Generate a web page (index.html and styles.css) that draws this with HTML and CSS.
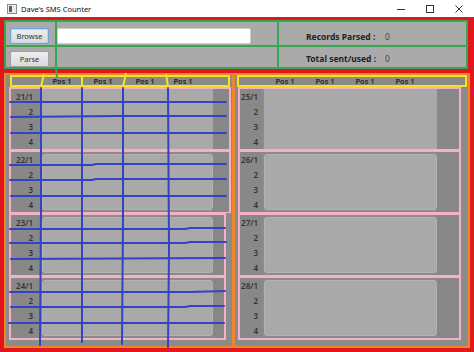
FILE: index.html
```html
<!DOCTYPE html>
<html lang="en">
<head>
    <meta charset="UTF-8">
    <meta name="viewport" content="width=device-width, initial-scale=1.0">
    <title>Dave's SMS Counter</title>
    <link rel="stylesheet" href="styles.css">
</head>
<body>
<div class="window">
    <header class="titlebar">
        <svg class="app-icon" width="10" height="10" viewBox="0 0 10 10">
            <rect x="0.5" y="0.5" width="9" height="9" fill="#ececec" stroke="#8a8a8a"/>
            <rect x="2" y="2" width="3" height="6" fill="#5f5f5f"/>
        </svg>
        <span class="title">Dave's SMS Counter</span>
        <div class="controls">
            <span class="ctl"><svg width="10" height="10" viewBox="0 0 10 10"><path d="M1 5.5H9" stroke="#333" fill="none"/></svg></span>
            <span class="ctl"><svg width="10" height="10" viewBox="0 0 10 10"><rect x="1.5" y="1.5" width="7" height="7" stroke="#333" fill="none"/></svg></span>
            <span class="ctl"><svg width="10" height="10" viewBox="0 0 10 10"><path d="M1.5 1.5L8.5 8.5M8.5 1.5L1.5 8.5" stroke="#333" fill="none"/></svg></span>
        </div>
    </header>

    <div class="app">
        <section class="top-panel">
            <div class="cell cell-up btn-cell"><button class="btn btn-focus">Browse</button></div>
            <div class="cell cell-up"><input class="file-field" type="text"></div>
            <div class="cell stat-cell"><span class="stat-label">Records Parsed :</span><span class="stat-value">0</span></div>
            <div class="cell btn-cell"><button class="btn">Parse</button></div>
            <div class="cell"></div>
            <div class="cell stat-cell"><span class="stat-label">Total sent/used :</span><span class="stat-value">0</span></div>
        </section>

        <section class="bottom-panel">
            <!-- left week -->
            <div class="pane pane-left">
                <div class="col-head">
                    <span></span><span>Pos 1</span><span>Pos 1</span><span>Pos 1</span><span>Pos 1</span>
                </div>
                <div class="group">
                    <div class="labels"><span>21/1</span><span>2</span><span>3</span><span>4</span></div>
                    <div class="rows"></div>
                    <div class="scroll"></div>
                </div>
                <div class="group boxed">
                    <div class="labels"><span>22/1</span><span>2</span><span>3</span><span>4</span></div>
                    <div class="rows"></div>
                    <div class="scroll"></div>
                </div>
                <div class="group boxed narrow">
                    <div class="labels"><span>23/1</span><span>2</span><span>3</span><span>4</span></div>
                    <div class="rows"></div>
                    <div class="scroll"></div>
                </div>
                <div class="group boxed narrow">
                    <div class="labels"><span>24/1</span><span>2</span><span>3</span><span>4</span></div>
                    <div class="rows"></div>
                    <div class="scroll"></div>
                </div>
            </div>

            <!-- right week -->
            <div class="pane pane-right">
                <div class="col-head">
                    <span></span><span>Pos 1</span><span>Pos 1</span><span>Pos 1</span><span>Pos 1</span>
                </div>
                <div class="group">
                    <div class="labels"><span>25/1</span><span>2</span><span>3</span><span>4</span></div>
                    <div class="rows"></div>
                    <div class="scroll"></div>
                </div>
                <div class="group boxed">
                    <div class="labels"><span>26/1</span><span>2</span><span>3</span><span>4</span></div>
                    <div class="rows"></div>
                    <div class="scroll"></div>
                </div>
                <div class="group boxed">
                    <div class="labels"><span>27/1</span><span>2</span><span>3</span><span>4</span></div>
                    <div class="rows"></div>
                    <div class="scroll"></div>
                </div>
                <div class="group boxed">
                    <div class="labels"><span>28/1</span><span>2</span><span>3</span><span>4</span></div>
                    <div class="rows"></div>
                    <div class="scroll"></div>
                </div>
            </div>
        </section>
    </div>

    <!-- hand drawn markup over the screenshot -->
    <svg class="marks" width="474" height="352" viewBox="0 0 474 352">
        <g stroke="#3242c9" stroke-width="2" fill="none" stroke-linecap="round">
            <path d="M41 88 L41 210 L40 345"/>
            <path d="M82 88 L82 260 L82 342"/>
            <path d="M123 88 L123 220 L122 344"/>
            <path d="M168 88 L169 250 L168 347"/>
            <path d="M10 102 L226 102"/>
            <path d="M11 117 L120 116 L226 116"/>
            <path d="M11 133 L226 133"/>
            <path d="M10 165 L92 165 L96 164 L226 164"/>
            <path d="M10 180 L92 180 L96 179 L226 179"/>
            <path d="M11 196 L226 196"/>
            <path d="M10 229 L185 229 L190 228 L225 228"/>
            <path d="M10 243 L185 243 L190 242 L226 242"/>
            <path d="M11 259 L225 258"/>
            <path d="M10 292 L190 292 L225 291"/>
            <path d="M11 307 L185 307 L190 306 L224 306"/>
            <path d="M9 323 L224 323"/>
        </g>
        <g stroke="#f1e41b" stroke-width="2" fill="none">
            <path d="M44 74 L41 87"/>
            <path d="M82 75 L82 87"/>
            <path d="M126 73 L123 87"/>
            <path d="M166 74 L168 87"/>
        </g>
        <path d="M56 68 L57 77" stroke="#37a84f" stroke-width="2" fill="none"/>
    </svg>
</div>
</body>
</html>
```

FILE: styles.css
```css
* {
    box-sizing: border-box;
}

body {
    margin: 0;
    background-color: #fff;
    font-family: 'Noto Sans', 'Open Sans', sans-serif;
}

.window {
    position: relative;
    width: 474px;
    height: 352px;
    overflow: hidden;
}

/* Title bar */
.titlebar {
    height: 17px;
    display: flex;
    align-items: center;
    padding-left: 7px;
    background-color: #fff;
}

.app-icon {
    display: block;
}

.title {
    margin-left: 4px;
    font-size: 7.5px;
    color: #111;
}

.controls {
    margin-left: auto;
    display: flex;
    height: 100%;
}

.ctl {
    width: 29px;
    display: flex;
    align-items: center;
    justify-content: center;
}

.ctl:last-child {
    margin-right: 1px;
}

/* App frame (red) */
.app {
    height: 335px;
    display: flex;
    flex-direction: column;
    gap: 4px;
    padding: 3px 4px 4px 4px;
    background-color: #e3151d;
}

/* Top controls (green) */
.top-panel {
    height: 49px;
    margin-right: 2px;
    display: grid;
    grid-template-columns: 49px 220px 1fr;
    grid-template-rows: 23px 20px;
    gap: 2px;
    padding: 2px;
    background-color: #37a84f;
}

.cell {
    display: flex;
    align-items: flex-end;
    background-color: #aaa;
}

.cell-up {
    padding-bottom: 1px;
}

.btn-cell {
    padding-left: 4px;
}

.btn {
    width: 39px;
    height: 16px;
    padding: 0;
    font-family: inherit;
    font-size: 7.5px;
    color: #333;
    background: linear-gradient(#eee, #dadada);
    border: 1px solid #a0a0a0;
    border-radius: 2px;
}

.btn-focus {
    border-color: #6aa6d6;
    box-shadow: inset 0 0 0 1px #bcd8ef;
}

.file-field {
    width: 194px;
    height: 16px;
    padding: 0;
    border: 1px solid #cfcfcf;
    border-radius: 2px;
    background-color: #fff;
}

.stat-cell {
    padding-left: 27px;
    padding-bottom: 2px;
    font-size: 8.5px;
    line-height: 12px;
    color: #222;
}

.stat-label {
    width: 79px;
    font-weight: bold;
}

.stat-value {
    color: #444;
}

/* Bottom weeks (orange) */
.bottom-panel {
    height: 275px;
    display: flex;
    border: 2px solid #e8872c;
    background-color: #8b8b8b;
}

.pane {
    display: flex;
    flex-direction: column;
}

.pane-left {
    width: 229px;
    border-right: 3px solid #e8872c;
}

.pane-right {
    flex: 1;
}

.col-head {
    height: 12px;
    display: grid;
    align-items: center;
    border: 2px solid #f1e41b;
    background-color: #8a8a8a;
    font-size: 7.5px;
    line-height: 8px;
    font-weight: 600;
    color: #222;
    text-align: center;
}

.pane-left .col-head {
    margin: 0 2px 0 4px;
    grid-template-columns: 30px 40px 42px 42px 34px;
}

.pane-right .col-head {
    margin: 0 1px 0 2px;
    grid-template-columns: 26px 40px 40px 40px 40px;
}

.group {
    height: 63px;
    display: flex;
    border: 2px solid #f3b0c6;
    border-bottom-width: 1px;
}

.group:last-child {
    height: 64px;
    border-bottom-width: 2px;
}

.pane-left .group {
    margin: 0 1px 0 3px;
}

.pane-left .group.narrow {
    margin-right: 6px;
}

.pane-right .group {
    margin: 0 7px 0 3px;
}

.labels {
    display: flex;
    flex-direction: column;
    text-align: right;
    font-size: 8px;
    font-weight: 600;
    color: #333;
    background-color: #888;
}

.labels span {
    height: 15px;
    line-height: 15px;
}

.pane-left .labels {
    width: 30px;
    padding-right: 8px;
}

.pane-right .labels {
    width: 22px;
    padding-right: 4px;
}

.rows {
    background-color: #a9a9a9;
}

.pane-left .rows {
    width: 172px;
}

.pane-right .rows {
    width: 173px;
    margin-left: 2px;
}

.group.boxed .rows {
    margin-top: 2px;
    margin-bottom: 2px;
    border: 1px solid #b3b3b3;
    border-radius: 3px;
}

.pane-left .group.boxed .rows {
    width: 171px;
    margin-left: 1px;
}

.scroll {
    flex: 1;
    background-color: #878787;
}

/* markup layer */
.marks {
    position: absolute;
    top: 0;
    left: 0;
    pointer-events: none;
}
```
